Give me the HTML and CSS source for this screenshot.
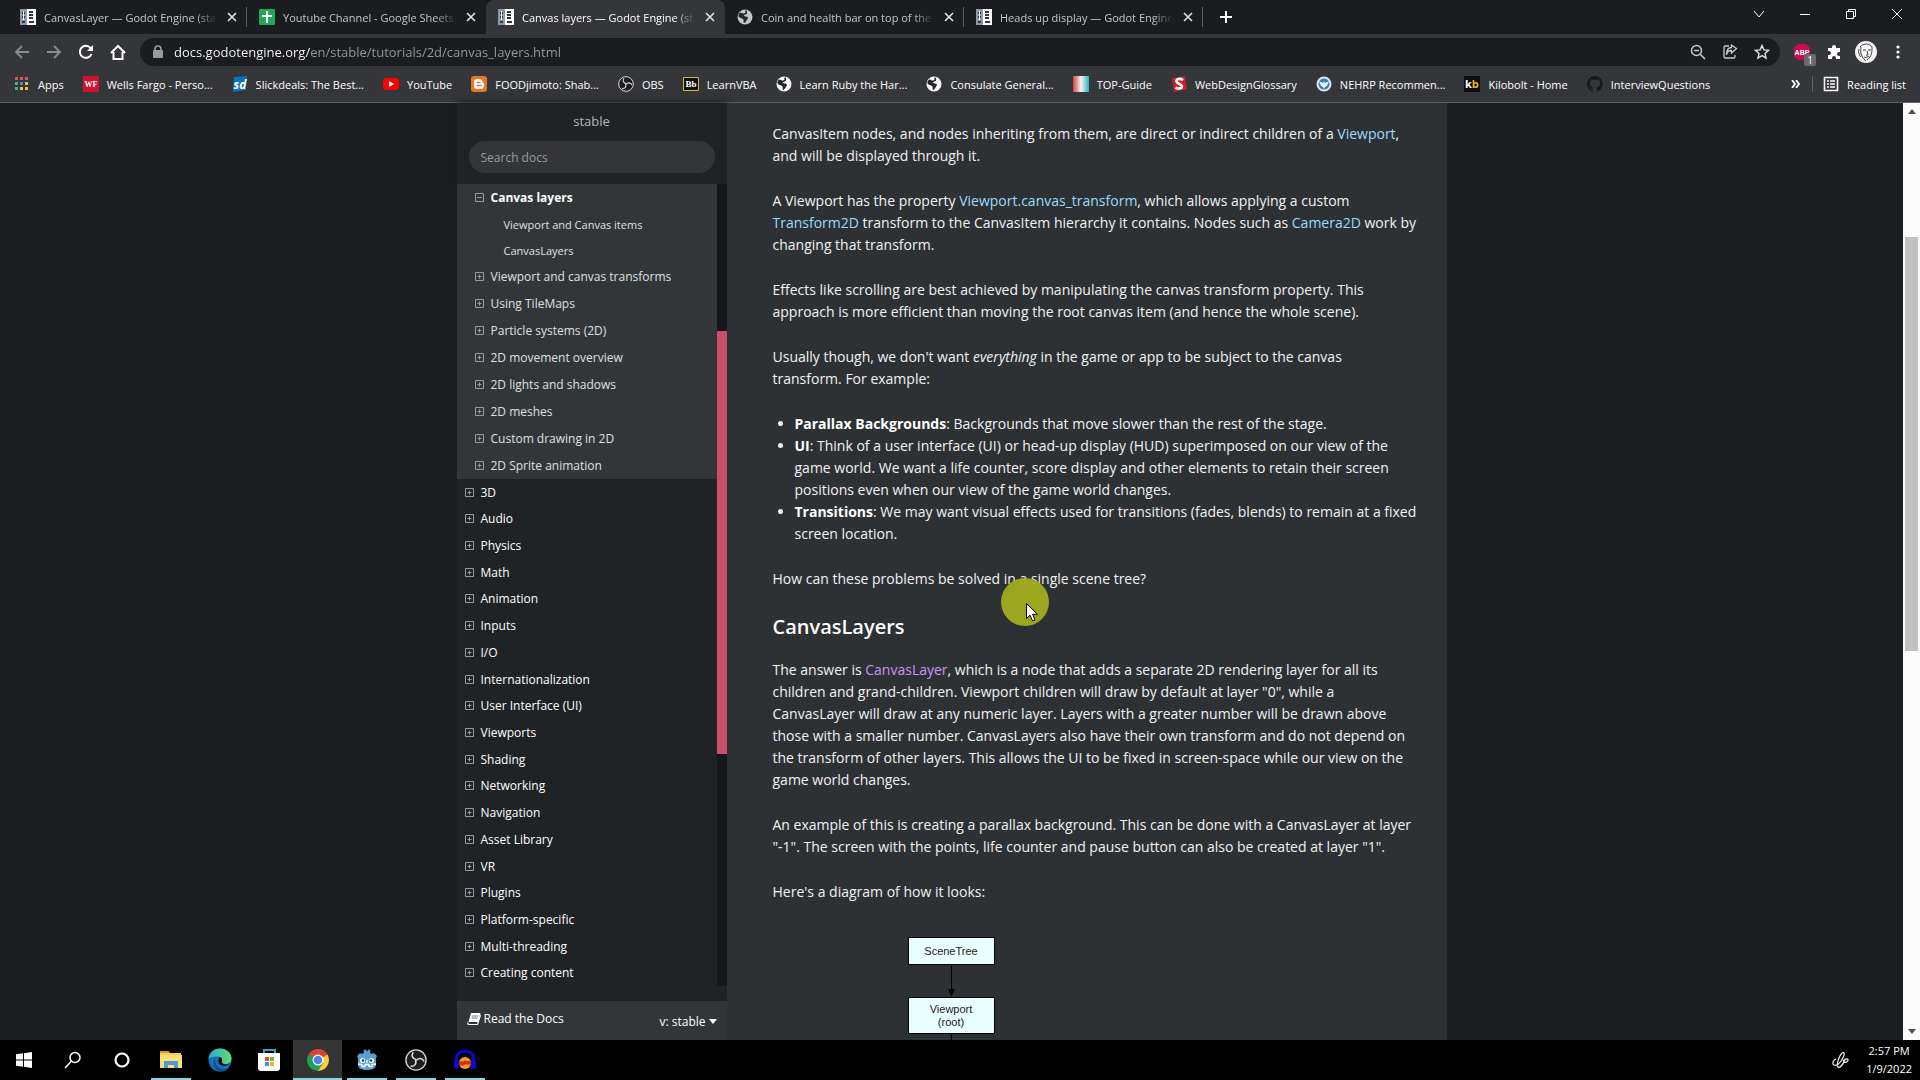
FILE: index.html
```html
<!DOCTYPE html>
<html lang="en">
    <head>
        <meta charset="utf-8">
        <title>Canvas layers — Godot Engine (stable) documentation</title>
        <link rel="stylesheet" href="styles.css">
    </head>
    <body>
        <!-- shared icons -->
        <svg class="defs">
            <symbol id="i-docs" viewBox="0 0 16 16">
                <path fill="#8b9aa8" d="M0 0h7v16H0z"/>
                <path fill="#fff" d="M7 0h9v16H7z"/>
                <path fill="#35363a" d="M2 3h3v2H2zM2 7h3v2H2zM2 12h3v2H2zM9 2h4v2H9zM9 5h4v2H9zM9 8h4v2H9zM9 12h5v2H9z"/>
                <path fill="#fff" d="M3 2h1v9H3z"/>
            </symbol>
            <symbol id="i-close" viewBox="0 0 10 10">
                <path d="M1 1l8 8M9 1L1 9" fill="none" stroke="currentColor" stroke-width="1.6"/>
            </symbol>
            <symbol id="i-globe" viewBox="0 0 16 16">
                <circle cx="8" cy="8" r="7.5" fill="currentColor"/>
                <path fill="#27282c" d="M3 3.5c2 .2 2.500 1.200 4 1s2-1.500 1-2.700l2-.3c-.5 1.500.6 2 0 3-.8 1.300-2.600.8-3.200 2.200.9 1.300 3 .2 4 1.500.7 1.200-.6 2-1.300 3.300C9 12.500 8 14 6.800 14c-.6-1.600.2-2.600-.6-3.800C5 8.700 2.500 9.400 1.500 7.500 1.200 6 2 4.500 3 3.500z"/>
            </symbol>
            <symbol id="i-plus" viewBox="0 0 9 9">
                <path d="M.5.5h8v8h-8zM4.500 2.500v4M2.500 4.500h4" fill="none" stroke="#9a9c9e"/>
            </symbol>
            <symbol id="i-minus" viewBox="0 0 9 9">
                <path d="M.5.5h8v8h-8zM2 4.500h5" fill="none" stroke="#9a9c9e"/>
            </symbol>
            <symbol id="i-obs" viewBox="0 0 24 24">
                <circle cx="12" cy="12" r="11" fill="#1d1d1f" stroke="#d8d8d8" stroke-width="1.500"/>
                <g fill="none" stroke="#d8d8d8" stroke-width="1.700">
                    <path d="M12.500 11.500C8 11 6.500 7 9 3.500"/>
                    <path d="M12.500 11.500C8 11 6.500 7 9 3.500" transform="rotate(120 12 12)"/>
                    <path d="M12.500 11.500C8 11 6.500 7 9 3.500" transform="rotate(240 12 12)"/>
                </g>
            </symbol>
        </svg>

        <div class="tab-strip">
            <div class="tab">
                <svg class="icon"><use href="#i-docs"/></svg>
                <span class="tab-title">CanvasLayer — Godot Engine (stable)</span>
                <button class="tab-close" aria-label="Close tab"><svg><use href="#i-close"/></svg></button>
            </div>
            <div class="tab no-line">
                <svg class="icon" viewBox="0 0 16 16"><rect width="16" height="16" rx="1" fill="#1fa855"/><path d="M7 2h2v12H7zM3 6h10v2H3z" fill="#fff"/></svg>
                <span class="tab-title">Youtube Channel - Google Sheets</span>
                <button class="tab-close" aria-label="Close tab"><svg><use href="#i-close"/></svg></button>
            </div>
            <div class="tab no-line active">
                <svg class="icon"><use href="#i-docs"/></svg>
                <span class="tab-title">Canvas layers — Godot Engine (stable)</span>
                <button class="tab-close" aria-label="Close tab"><svg><use href="#i-close"/></svg></button>
            </div>
            <div class="tab">
                <svg class="icon"><use href="#i-globe"/></svg>
                <span class="tab-title">Coin and health bar on top of the</span>
                <button class="tab-close" aria-label="Close tab"><svg><use href="#i-close"/></svg></button>
            </div>
            <div class="tab">
                <svg class="icon"><use href="#i-docs"/></svg>
                <span class="tab-title">Heads up display — Godot Engine</span>
                <button class="tab-close" aria-label="Close tab"><svg><use href="#i-close"/></svg></button>
            </div>
            <button class="new-tab" aria-label="New tab"><svg width="12" height="12"><path d="M6 0v12M0 6h12" stroke="#fff" stroke-width="2"/></svg></button>
            <div class="window-buttons">
                <button aria-label="Search tabs"><svg width="12" height="12"><path d="M1 3l5 6 5-6" fill="none" stroke="#fff"/></svg></button>
                <button aria-label="Minimize"><svg width="10" height="10"><path d="M0 5.500h10" stroke="#fff"/></svg></button>
                <button aria-label="Restore"><svg width="10" height="10"><path d="M.5 2.500h7v7h-7zM2.500 2.500v-2h7v7h-2" fill="none" stroke="#fff"/></svg></button>
                <button aria-label="Close"><svg width="10" height="10"><path d="M0 0l10 10M10 0L0 10" stroke="#fff"/></svg></button>
            </div>
        </div>

        <div class="toolbar">
            <button class="dim" aria-label="Back"><svg width="16" height="16"><path d="M15 8H2M8 2L2 8l6 6" fill="none" stroke="currentColor" stroke-width="1.800"/></svg></button>
            <button class="dim" aria-label="Forward"><svg width="16" height="16"><path d="M1 8h13M8 2l6 6-6 6" fill="none" stroke="currentColor" stroke-width="1.800"/></svg></button>
            <button aria-label="Reload"><svg width="16" height="16"><path d="M13.500 10A6 6 0 1 1 12.500 4" fill="none" stroke="#fff" stroke-width="2"/><path d="M15 1v6H9z" fill="#fff"/></svg></button>
            <button aria-label="Home"><svg width="16" height="16"><path d="M3.500 8v7h9V8M1 9l7-7 7 7" fill="none" stroke="#fff" stroke-width="2"/></svg></button>
            <div class="omnibox">
                <svg width="12" height="14"><path d="M3 6V4a3 3 0 0 1 6 0v2" fill="none" stroke="#9a9b9e" stroke-width="1.600"/><rect x="1" y="5" width="10" height="8" rx="1" fill="#9a9b9e"/></svg>
                <input class="url" type="text" aria-label="Address" value="docs.godotengine.org/en/stable/tutorials/2d/canvas_layers.html">
                <button aria-label="Zoom"><svg width="16" height="16"><circle cx="6.500" cy="6.500" r="5" fill="none" stroke="#c8c9cc" stroke-width="1.500"/><path d="M10 10l5 5M4 6.500h5" stroke="#c8c9cc" stroke-width="1.500"/></svg></button>
                <button aria-label="Share"><svg width="16" height="16"><path d="M7 2H3.500A1.500 1.500 0 0 0 2 3.500v9A1.500 1.500 0 0 0 3.500 14h8a1.500 1.500 0 0 0 1.500-1.500V11M4.500 11c.5-3.500 2.500-4.500 5-4.500V9l5-4.500L9.500 1v2.500c-3.500 0-5 3-5 7.500z" fill="none" stroke="#c8c9cc" stroke-width="1.300"/></svg></button>
                <button aria-label="Bookmark"><svg width="16" height="16"><path d="M8 1.500l1.900 4.400 4.600.4-3.500 3.100 1 4.600L8 11.600 4 14l1-4.600-3.500-3.100 4.600-.4z" fill="none" stroke="#e0e1e3" stroke-width="1.400"/></svg></button>
            </div>
            <button class="abp" aria-label="Adblock Plus"><svg width="18" height="18" viewBox="0 0 18 18"><path d="M5 1h8l4 4v8l-4 4H5l-4-4V5z" fill="#c70d4e"/><text x="9" y="12" text-anchor="middle" class="abp-text">ABP</text></svg><span class="badge">1</span></button>
            <button aria-label="Extensions"><svg width="16" height="16"><path d="M6 3a2 2 0 0 1 4 0v1h4v4h-1a2 2 0 0 0 0 4h1v3h-4v-1a2 2 0 0 0-4 0v1H2v-4h1a2 2 0 0 0 0-4H2V4h4z" fill="#fff"/></svg></button>
            <button aria-label="Profile"><svg width="22" height="22"><circle cx="11" cy="11" r="11" fill="#f4f4f4"/><path d="M5 6c3-4 10-4 12 0M6 6c0 4-1 6 1 9 1 3 3 4 4 5M17 6c0 5 0 9-5 13M8 9h3M13 9h3M12 10l1 4h-2M9 16c2 1 4 0 5-1M4 8c-1 3 0 6 2 8" fill="none" stroke="#444"/></svg></button>
            <button aria-label="Menu"><svg width="4" height="14"><circle cx="2" cy="2" r="1.600" fill="#fff"/><circle cx="2" cy="7" r="1.600" fill="#fff"/><circle cx="2" cy="12" r="1.600" fill="#fff"/></svg></button>
        </div>

        <div class="bookmarks">
            <a href="#"><svg class="icon" viewBox="0 0 16 16"><path fill="#e0524a" d="M1 1h3v3H1zM6 1h3v3H6zM11 1h3v3h-3z"/><path fill="#4caf6a" d="M1 6h3v3H1zM1 11h3v3H1z"/><path fill="#4a88e0" d="M6 6h3v3H6z"/><path fill="#e8c15a" d="M11 6h3v3h-3zM6 11h3v3H6zM11 11h3v3h-3z"/></svg>Apps</a>
            <a href="#"><svg class="icon" viewBox="0 0 16 16"><rect width="16" height="16" fill="#cf1330"/><text x="8" y="11" text-anchor="middle" class="wf-text">WF</text></svg>Wells Fargo - Perso...</a>
            <a href="#"><svg class="icon" viewBox="0 0 16 16"><path d="M2 1l13-1-1 14-13 2z" fill="#1272b5"/><text x="8" y="13" text-anchor="middle" class="sd-text">sd</text></svg>Slickdeals: The Best...</a>
            <a href="#"><svg class="icon" viewBox="0 0 16 16"><rect y="2" width="16" height="12" rx="3" fill="#f00"/><path d="M6 5v6l5-3z" fill="#fff"/></svg>YouTube</a>
            <a href="#"><svg class="icon" viewBox="0 0 16 16"><rect width="16" height="16" rx="3" fill="#e8772a"/><path d="M6 3h3a3 3 0 0 1 2.500 3c0 1 1.500.5 1.500 2v2a3 3 0 0 1-3 3H6a3 3 0 0 1-3-3V6a3 3 0 0 1 3-3z" fill="#fff"/><path d="M6 6.500h3M6 9.500h4" stroke="#e8772a" stroke-width="1.500" stroke-linecap="round"/></svg>FOODjimoto: Shab...</a>
            <a href="#"><svg class="icon"><use href="#i-obs"/></svg>OBS</a>
            <a href="#"><svg class="icon" viewBox="0 0 16 16"><path d="M.5 1.500h15v13H.5z" fill="#111" stroke="#d8b64a"/><text x="8" y="11" text-anchor="middle" class="bb-text">Bb</text></svg>LearnVBA</a>
            <a href="#"><svg class="icon"><use href="#i-globe"/></svg>Learn Ruby the Har...</a>
            <a href="#"><svg class="icon"><use href="#i-globe"/></svg>Consulate General...</a>
            <a href="#"><svg class="icon" viewBox="0 0 16 16"><defs><linearGradient id="tg"><stop offset="0" stop-color="#d8403c"/><stop offset=".5" stop-color="#f5f5f5"/><stop offset="1" stop-color="#27b4c4"/></linearGradient></defs><rect width="16" height="16" fill="url(#tg)"/></svg>TOP-Guide</a>
            <a href="#"><svg class="icon" viewBox="0 0 16 16"><path d="M1 2l13-2 2 13-13 3z" fill="#c9202a"/><path d="M12 4C9 2 5 3 5.500 5.500S11 8 11 10.500 6 13 4.500 11.500" fill="none" stroke="#fff" stroke-width="2.600"/></svg>WebDesignGlossary</a>
            <a href="#"><svg class="icon" viewBox="0 0 16 16"><circle cx="8" cy="8" r="7.500" fill="#dfe9f2"/><circle cx="8" cy="8" r="5.500" fill="#3577a8"/><path d="M3 5l4 2 1-2 1 2 4-2-2 5-2 1-1 2-1-2-2-1z" fill="#e8f0f5"/></svg>NEHRP Recommen...</a>
            <a href="#"><svg class="icon" viewBox="0 0 16 16"><rect width="16" height="16" fill="#0c0c0c"/><text x="1" y="12" class="kb-text">k<tspan fill="#e5b52c">b</tspan></text></svg>Kilobolt - Home</a>
            <a href="#"><svg class="icon" viewBox="0 0 16 16"><path d="M8 0a8 8 0 0 0-2.500 15.600c.4.100.5-.2.500-.4v-1.500c-2 .5-2.700-1-2.700-1-.4-.9-.9-1.100-.9-1.100-.7-.5.100-.5.100-.5.800.1 1.200.8 1.200.8.700 1.300 1.900.9 2.300.7.100-.5.300-.9.500-1.100-1.800-.2-3.600-.9-3.600-4 0-.9.300-1.600.8-2.100-.1-.2-.4-1 .1-2.100 0 0 .7-.2 2.200.8a7.600 7.600 0 0 1 4 0c1.500-1 2.200-.8 2.200-.8.400 1.100.2 1.900.1 2.100.5.500.8 1.200.8 2.100 0 3.100-1.900 3.800-3.700 4 .3.200.6.700.6 1.500v2.100c0 .2.100.5.500.4A8 8 0 0 0 8 0z" fill="#17181b"/></svg>InterviewQuestions</a>
            <button class="more" aria-label="More bookmarks"><svg width="10" height="8"><path d="M1 0l3 4-3 4M5 0l3 4-3 4" fill="none" stroke="#fff" stroke-width="1.800"/></svg></button>
            <a class="reading" href="#"><svg class="icon" viewBox="0 0 16 16"><path d="M1.500 1.500h13v13h-13z" fill="none" stroke="#fff" stroke-width="1.600"/><path d="M4 5h2M7 5h5M4 8h2M7 8h5M4 11h2M7 11h5" stroke="#fff" stroke-width="1.500"/></svg>Reading list</a>
        </div>

        <div class="page">
            <div class="page-body">
                <nav class="sidebar">
                    <div class="side-header">
                        <div class="version">stable</div>
                        <input class="search" type="text" placeholder="Search docs" aria-label="Search docs">
                    </div>
                    <div class="side-scroll">
                        <div class="menu">
                            <ul class="menu-open">
                                <li class="current"><svg class="toggle"><use href="#i-minus"/></svg><a href="#">Canvas layers</a></li>
                                <li class="sub"><a href="#">Viewport and Canvas items</a></li>
                                <li class="sub"><a href="#">CanvasLayers</a></li>
                                <li><svg class="toggle"><use href="#i-plus"/></svg><a href="#">Viewport and canvas transforms</a></li>
                                <li><svg class="toggle"><use href="#i-plus"/></svg><a href="#">Using TileMaps</a></li>
                                <li><svg class="toggle"><use href="#i-plus"/></svg><a href="#">Particle systems (2D)</a></li>
                                <li><svg class="toggle"><use href="#i-plus"/></svg><a href="#">2D movement overview</a></li>
                                <li><svg class="toggle"><use href="#i-plus"/></svg><a href="#">2D lights and shadows</a></li>
                                <li><svg class="toggle"><use href="#i-plus"/></svg><a href="#">2D meshes</a></li>
                                <li><svg class="toggle"><use href="#i-plus"/></svg><a href="#">Custom drawing in 2D</a></li>
                                <li><svg class="toggle"><use href="#i-plus"/></svg><a href="#">2D Sprite animation</a></li>
                            </ul>
                            <ul class="menu-top">
                                <li><svg class="toggle"><use href="#i-plus"/></svg><a href="#">3D</a></li>
                                <li><svg class="toggle"><use href="#i-plus"/></svg><a href="#">Audio</a></li>
                                <li><svg class="toggle"><use href="#i-plus"/></svg><a href="#">Physics</a></li>
                                <li><svg class="toggle"><use href="#i-plus"/></svg><a href="#">Math</a></li>
                                <li><svg class="toggle"><use href="#i-plus"/></svg><a href="#">Animation</a></li>
                                <li><svg class="toggle"><use href="#i-plus"/></svg><a href="#">Inputs</a></li>
                                <li><svg class="toggle"><use href="#i-plus"/></svg><a href="#">I/O</a></li>
                                <li><svg class="toggle"><use href="#i-plus"/></svg><a href="#">Internationalization</a></li>
                                <li><svg class="toggle"><use href="#i-plus"/></svg><a href="#">User Interface (UI)</a></li>
                                <li><svg class="toggle"><use href="#i-plus"/></svg><a href="#">Viewports</a></li>
                                <li><svg class="toggle"><use href="#i-plus"/></svg><a href="#">Shading</a></li>
                                <li><svg class="toggle"><use href="#i-plus"/></svg><a href="#">Networking</a></li>
                                <li><svg class="toggle"><use href="#i-plus"/></svg><a href="#">Navigation</a></li>
                                <li><svg class="toggle"><use href="#i-plus"/></svg><a href="#">Asset Library</a></li>
                                <li><svg class="toggle"><use href="#i-plus"/></svg><a href="#">VR</a></li>
                                <li><svg class="toggle"><use href="#i-plus"/></svg><a href="#">Plugins</a></li>
                                <li><svg class="toggle"><use href="#i-plus"/></svg><a href="#">Platform-specific</a></li>
                                <li><svg class="toggle"><use href="#i-plus"/></svg><a href="#">Multi-threading</a></li>
                                <li><svg class="toggle"><use href="#i-plus"/></svg><a href="#">Creating content</a></li>
                            </ul>
                        </div>
                        <div class="side-track"><div class="side-thumb"></div></div>
                    </div>
                    <button class="side-footer">
                        <span class="rtd"><svg width="14" height="12"><path d="M4 0h9.500L11 9H1.500z" fill="#fff"/><path d="M5 3h6M4.500 5h6" stroke="#777"/><path d="M1 9.500c-.5 1 0 2 1 2h8.500L13.500 2" fill="none" stroke="#fff" stroke-width="1.200"/></svg>Read the Docs</span>
                        <span class="rtd-version">v: stable<svg width="8" height="5"><path d="M0 0h8L4 5z" fill="#fff"/></svg></span>
                    </button>
                </nav>

                <main class="content">
                    <p>CanvasItem nodes, and nodes inheriting from them, are direct or indirect children of a <a href="#">Viewport</a>, and will be displayed through it.</p>
                    <p>A Viewport has the property <a href="#">Viewport.canvas_transform</a>, which allows applying a custom <a href="#">Transform2D</a> transform to the CanvasItem hierarchy it contains. Nodes such as <a href="#">Camera2D</a> work by changing that transform.</p>
                    <p>Effects like scrolling are best achieved by manipulating the canvas transform property. This approach is more efficient than moving the root canvas item (and hence the whole scene).</p>
                    <p>Usually though, we don't want <em>everything</em> in the game or app to be subject to the canvas<br>transform. For example:</p>
                    <ul>
                        <li><strong>Parallax Backgrounds</strong>: Backgrounds that move slower than the rest of the stage.</li>
                        <li><strong>UI</strong>: Think of a user interface (UI) or head-up display (HUD) superimposed on our view of the game world. We want a life counter, score display and other elements to retain their screen positions even when our view of the game world changes.</li>
                        <li><strong>Transitions</strong>: We may want visual effects used for transitions (fades, blends) to remain at a fixed screen location.</li>
                    </ul>
                    <p>How can these problems be solved in a single scene tree?</p>
                    <h2>CanvasLayers</h2>
                    <p>The answer is <a class="visited" href="#">CanvasLayer</a>, which is a node that adds a separate 2D rendering layer for all its children and grand-children. Viewport children will draw by default at layer "0", while a<br>CanvasLayer will draw at any numeric layer. Layers with a greater number will be drawn above<br>those with a smaller number. CanvasLayers also have their own transform and do not depend on the transform of other layers. This allows the UI to be fixed in screen-space while our view on the game world changes.</p>
                    <p>An example of this is creating a parallax background. This can be done with a CanvasLayer at layer "-1". The screen with the points, life counter and pause button can also be created at layer "1".</p>
                    <p>Here's a diagram of how it looks:</p>
                    <svg class="diagram" width="360" height="160">
                        <path d="M178.500 29v24M178.500 97v40" stroke="#000"/>
                        <path d="M175 52h7l-3.500 8z"/>
                        <rect x="135.500" y=".5" width="86" height="27"/>
                        <text x="178" y="18">SceneTree</text>
                        <rect x="135.500" y="60.500" width="86" height="36"/>
                        <text x="178" y="76">Viewport</text>
                        <text x="178" y="89">(root)</text>
                    </svg>
                </main>
            </div>
            <div class="page-track">
                <svg width="8" height="5"><path d="M0 5h8L4 0z" fill="#505050"/></svg>
                <div class="page-rail"><div class="page-thumb"></div></div>
                <svg width="8" height="5"><path d="M0 0h8L4 5z" fill="#505050"/></svg>
            </div>
        </div>

        <div class="taskbar">
            <button aria-label="Start"><svg width="16" height="16"><path d="M0 2.300L7 1.300v6.200H0zM8 1.200L16 0v7.500H8zM0 8.500h7v6.200l-7-1zM8 8.500h8V16l-8-1.200z" fill="#fff"/></svg></button>
            <button aria-label="Search"><svg width="18" height="18"><circle cx="11" cy="6.500" r="5" fill="none" stroke="#fff" stroke-width="1.500"/><path d="M7.500 10L1 17" stroke="#fff" stroke-width="1.500"/></svg></button>
            <button aria-label="Cortana"><svg width="16" height="16"><circle cx="8" cy="8" r="6.500" fill="none" stroke="#fff" stroke-width="2.200"/></svg></button>
            <button class="open" aria-label="File Explorer"><svg width="22" height="20"><path d="M0 1h8l2 2h11v15H0z" fill="#f3cd50"/><path d="M0 1h8l2 2H0z" fill="#d99a32"/><path d="M0 5h22v13H0z" fill="#fadf78"/><path d="M4 18v-7h14v7h-4v-3H8v3z" fill="#4a9ad4"/></svg></button>
            <button aria-label="Edge"><svg width="24" height="24" viewBox="0 0 24 24"><defs><linearGradient id="eg"><stop offset="0" stop-color="#2aa9e0"/><stop offset="1" stop-color="#5fdf6a"/></linearGradient></defs><circle cx="12" cy="12" r="11.500" fill="#1470b8"/><path d="M.6 11C1 4.500 6 .5 12 .5c7 0 11.500 5 11.500 9.500 0 4-3 6-6.500 6-2.500 0-4-1-3.500-2 2-3-1-6-5-5.500C4.500 8.600 1.500 9.500.6 11z" fill="url(#eg)"/><path d="M8 10c-2 4 0 11 8 11 2 0 4-1 5.500-2.500-2 3.500-6 5.400-10 5C4.500 22 4 13 8 10z" fill="#0c4f92"/><path d="M13.500 14c1.500-2 0-4.500-2-5-1.500 2-1.500 5 0 7 1.500 1.500 4 2 7 1.500l4-2.500c-2 1.500-8 2.500-9-1z" fill="#000"/></svg></button>
            <button aria-label="Microsoft Store"><svg width="24" height="24"><path d="M7 6V2h11v4" fill="none" stroke="#3f9fc4" stroke-width="2"/><path d="M1 5h22v15a3 3 0 0 1-3 3H4a3 3 0 0 1-3-3z" fill="#fff"/><path d="M8 9h4v4H8z" fill="#e2502c"/><path d="M13 9h4v4h-4z" fill="#7db52f"/><path d="M8 14h4v4H8z" fill="#2a9fdc"/><path d="M13 14h4v4h-4z" fill="#f2b521"/></svg></button>
            <button class="open focused" aria-label="Chrome"><svg width="24" height="24" viewBox="0 0 24 24"><path d="M12 12L2.500 6.500a11 11 0 0 1 19 0z" fill="#dc4437"/><path d="M12 12L2.500 6.500A11 11 0 0 0 12 23l5-8z" fill="#1ea05a"/><path d="M12 12l9.500-5.500A11 11 0 0 1 12 23l5-8z" fill="#fccd3f"/><path d="M12 7h9.800l-.5-1H4z" fill="#dc4437"/><circle cx="12" cy="12" r="5.500" fill="#fff"/><circle cx="12" cy="12" r="4.300" fill="#4a86e8"/></svg></button>
            <button class="open" aria-label="Godot"><svg width="22" height="22"><path d="M1 7l3-3 2 1 2-1-.5-3L10 .5 11 3l1-2.500 2.500.5L14 4l2 1 2-1 3 3-1 2v7c0 3-4 5-9 5s-9-2-9-5V9z" fill="#5b9fd0"/><circle cx="6.500" cy="11.500" r="2.500" fill="#fff"/><circle cx="15.500" cy="11.500" r="2.500" fill="#fff"/><circle cx="7" cy="11.500" r="1.300" fill="#333"/><circle cx="15" cy="11.500" r="1.300" fill="#333"/><path d="M11 11v3M2 15l4 .5v2h3v-2h4v2h3v-2l4-.5" fill="none" stroke="#fff" stroke-width="1.300"/></svg></button>
            <button class="open" aria-label="OBS"><svg width="22" height="22"><use href="#i-obs"/></svg></button>
            <button class="open" aria-label="Audacity"><svg width="24" height="22"><path d="M3 12C3 5 7 2 12 2s9 3 9 10" fill="none" stroke="#0a0ad0" stroke-width="3"/><circle cx="12" cy="14" r="6" fill="#f2a01e"/><path d="M6 13c2-2 3 1 5-1s3 2 7-1v4c-4 2-5-1-7 1s-3-1-5 0z" fill="#d8281e"/><rect x="1" y="11" width="5" height="9" rx="2" fill="#0a0ad0"/><rect x="18" y="11" width="5" height="9" rx="2" fill="#0a0ad0"/></svg></button>
            <div class="tray">
                <svg width="18" height="18"><path d="M4 8c-3 1-4 5-2 6s5-1 7-4 4-6 3-8-4 2-5 5-3 7-1 9 6-4 7-8M11 10c2-2 5-3 5-1s-3 3-5 2" fill="none" stroke="#e8e8e8" stroke-width="1.300"/></svg>
                <div class="clock">2:57 PM<br>1/9/2022</div>
            </div>
        </div>

        <!-- click highlight under the pointer -->
        <div class="pointer">
            <svg width="48" height="48" viewBox="0 0 48 48"><circle cx="24" cy="24" r="24" fill="#a1ad1c" fill-opacity=".94"/><path d="M25.500 25.500v15l3.500-3.300 2.500 5.600 2.500-1-2.400-5.500h4.900z" fill="#fff" stroke="#000"/></svg>
        </div>
    </body>
</html>
```
FILE: styles.css
```css
* {
  box-sizing: border-box;
}

body {
  margin: 0;
  height: 100vh;
  display: flex;
  flex-direction: column;
  overflow: hidden;
  background: #1b1e21;
  color: #fff;
  font-family: "Open Sans", "Noto Sans", sans-serif;
  font-size: 12px;
}

a {
  color: inherit;
  text-decoration: none;
}

ul {
  margin: 0;
  padding: 0;
  list-style: none;
}

button {
  display: flex;
  align-items: center;
  justify-content: center;
  padding: 0;
  border: 0;
  background: none;
  color: inherit;
  font: inherit;
}

svg {
  flex: none;
}

.defs {
  display: none;
}

.icon {
  width: 16px;
  height: 16px;
}

/* tabs */

.tab-strip {
  display: flex;
  height: 34px;
  padding-left: 8px;
  background: #1b1c1f;
  font-size: 11px;
}

.tab {
  display: flex;
  align-items: center;
  gap: 8px;
  width: 239px;
  padding: 0 8px 0 12px;
  color: #c4c6ca;
  background: linear-gradient(#5a5b5e, #5a5b5e) right center / 1px 20px no-repeat;
}

.tab.no-line {
  background: none;
}

.tab.active {
  background: #35363a;
  color: #fff;
  border-radius: 8px 8px 0 0;
}

.tab-title {
  flex: 1;
  overflow: hidden;
  white-space: nowrap;
  mask-image: linear-gradient(to right, #000 88%, transparent);
}

.tab-close {
  width: 14px;
  height: 16px;
  color: #e4e5e7;
}

.tab-close svg {
  width: 10px;
  height: 10px;
}

.new-tab {
  width: 46px;
}

.window-buttons {
  display: flex;
  margin-left: auto;
  height: 28px;
}

.window-buttons button {
  width: 46px;
}

/* toolbar */

.toolbar {
  display: flex;
  padding: 4px 6px 0;
  background: #35363a;
}

.toolbar button {
  width: 32px;
  height: 28px;
}

.toolbar .dim {
  color: #8b8c90;
}

.omnibox {
  display: flex;
  align-items: center;
  flex: 1;
  height: 28px;
  margin: 0 6px;
  padding: 0 2px 0 12px;
  border-radius: 14px;
  background: #1b1c1f;
}

.url {
  flex: 1;
  min-width: 0;
  padding: 0 0 0 10px;
  border: 0;
  outline: 0;
  font: 13px "Open Sans", sans-serif;
  color: transparent;
  background: linear-gradient(to right, #fff 146px, #9a9b9e 146px);
  -webkit-background-clip: text;
  background-clip: text;
}

.abp {
  position: relative;
}

.abp-text {
  font: bold 7px "Liberation Sans", sans-serif;
  fill: #fff;
}

.badge {
  position: absolute;
  right: 2px;
  bottom: 0;
  width: 12px;
  border-radius: 2px;
  background: #6a6b6f;
  font-size: 10px;
  line-height: 12px;
}

/* bookmarks */

.bookmarks {
  display: flex;
  align-items: center;
  gap: 19px;
  height: 37px;
  padding: 0 14px;
  border-bottom: 1px solid #5f6063;
  background: #35363a;
  font-size: 11px;
  white-space: nowrap;
}

.bookmarks a {
  display: flex;
  align-items: center;
  gap: 8px;
}

.bookmarks .more {
  margin-left: auto;
}

.bookmarks .reading {
  margin-left: -8px;
  padding-left: 10px;
  border-left: 1px solid #5f6063;
}

.wf-text {
  font: bold 8px "Liberation Serif", serif;
  fill: #fff;
}

.sd-text {
  font: italic bold 12px "Open Sans", sans-serif;
  fill: #fff;
}

.bb-text {
  font: bold 9px "Liberation Serif", serif;
  fill: #fff;
}

.kb-text {
  font: bold 11px "Open Sans", sans-serif;
  fill: #fff;
}

/* docs page */

.page {
  display: flex;
  flex: 1;
  min-height: 0;
}

.page-body {
  display: flex;
  justify-content: center;
  flex: 1;
}

.sidebar {
  display: flex;
  flex-direction: column;
  width: 270px;
  background: #202326;
  font-size: 12px;
}

.side-header {
  padding: 7px 12px 11px;
  box-shadow: 0 0 8px #16181a;
  text-align: center;
}

.version {
  margin-bottom: 9px;
  font-size: 13px;
  line-height: 22px;
  color: #b4b6b8;
}

.search {
  width: 100%;
  height: 32px;
  padding: 0 12px;
  border: 0;
  border-radius: 16px;
  background: #333538;
  color: #fff;
  font: inherit;
}

.search::placeholder {
  color: #9b9c9e;
}

.side-scroll {
  display: flex;
  flex: 1;
  margin-bottom: 15px;
}

.menu {
  display: flex;
  flex-direction: column;
  flex: 1;
}

.menu li {
  display: flex;
  align-items: center;
  gap: 7px;
}

.toggle {
  width: 9px;
  height: 9px;
}

.menu-open {
  background: #333639;
  color: #dfe0e1;
}

.menu-open li {
  height: 27px;
  padding-left: 18px;
}

.menu-open .current {
  font-weight: bold;
  color: #fff;
}

.menu-open .sub {
  height: 26px;
  padding-left: 47px;
  font-size: 11px;
}

.menu-top {
  display: flex;
  flex-direction: column;
  justify-content: space-between;
  flex: 1;
}

.menu-top li {
  height: 26px;
  padding-left: 8px;
}

.side-track {
  width: 10px;
  padding-top: 147px;
  background: #14171a;
}

.side-thumb {
  height: 423px;
  background: #c9506c;
}

.side-footer {
  justify-content: space-between;
  height: 39px;
  padding: 0 10px 4px;
  background: #333639;
}

.rtd,
.rtd-version {
  display: flex;
  align-items: center;
  gap: 3px;
}

.rtd-version {
  padding-top: 6px;
}

.content {
  width: 720px;
  padding: 20px 21px 0 46px;
  overflow: hidden;
  background: #2e3134;
  color: #f2f3f3;
  font-size: 14px;
  line-height: 22px;
}

.content p {
  margin: 0 0 23px;
}

.content ul {
  margin-bottom: 23px;
  padding-left: 22px;
  list-style: disc;
}

.content a {
  color: #99dbff;
}

.content .visited {
  color: #cb94f2;
}

.content strong {
  color: #fff;
}

.content h2 {
  margin: 0 0 18px;
  font-size: 20px;
  font-weight: 600;
  line-height: 28px;
  color: #fff;
}

.diagram {
  display: block;
  margin-top: 34px;
  fill: #000;
}

.diagram rect {
  fill: #eaffff;
  stroke: #000;
}

.diagram text {
  font: 11px "Liberation Sans", sans-serif;
  fill: #222;
  text-anchor: middle;
}

.page-track {
  display: flex;
  flex-direction: column;
  align-items: center;
  width: 17px;
  padding: 6px 0;
  background: #fcfcfc;
}

.page-rail {
  flex: 1;
  width: 13px;
  padding-top: 123px;
}

.page-thumb {
  height: 414px;
  background: #c1c1c1;
}

/* taskbar */

.taskbar {
  display: flex;
  height: 40px;
  background: #000;
}

.taskbar button {
  width: 49px;
}

.taskbar button:first-child {
  width: 48px;
}

.taskbar .open {
  background: linear-gradient(#8fd3e0, #8fd3e0) center bottom / 40px 2px no-repeat;
}

.taskbar .focused {
  background: linear-gradient(#8fd3e0, #8fd3e0) center bottom / 49px 2px no-repeat #353535;
}

.tray {
  display: flex;
  align-items: center;
  gap: 16px;
  margin-left: auto;
  padding-right: 8px;
}

.clock {
  font-size: 11px;
  line-height: 18px;
  text-align: center;
}

.pointer {
  position: absolute;
  left: 1001px;
  top: 578px;
  pointer-events: none;
}
```
